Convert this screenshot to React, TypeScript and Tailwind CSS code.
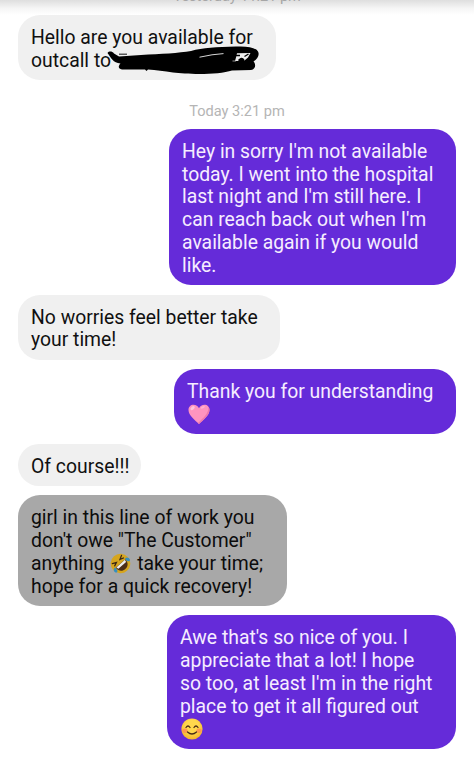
import type { ReactNode } from 'react';

type Message = {
  id: number;
  tone: 'received' | 'sent' | 'muted';
  width: string;
  lines: ReactNode[];
};

const toneClass = {
  received: 'self-start bg-[#f0f0f0] text-[#101010]',
  sent: 'self-end bg-[#652bd9] text-[#f6edff]',
  muted: 'self-start bg-[#a8a8a8] text-[#0c0c0c]',
};

const earlier: Message[] = [
  { id: 1, tone: 'received', width: 'w-[258px]', lines: ['Hello are you available for', <>outcall to<Redaction /></>] },
];

const today: Message[] = [
  {
    id: 2,
    tone: 'sent',
    width: 'w-[287px]',
    lines: [
      "Hey in sorry I'm not available",
      'today. I went into the hospital',
      "last night and I'm still here. I",
      "can reach back out when I'm",
      'available again if you would',
      'like.',
    ],
  },
  { id: 3, tone: 'received', width: 'w-[262px]', lines: ['No worries feel better take', 'your time!'] },
  { id: 4, tone: 'sent', width: 'w-[282px]', lines: ['Thank you for understanding', <Heart />] },
  { id: 5, tone: 'received', width: 'w-[123px]', lines: ['Of course!!!'] },
  {
    id: 6,
    tone: 'muted',
    width: 'w-[269px]',
    lines: [
      'girl in this line of work you',
      'don\'t owe "The Customer"',
      <>anything <Rofl /> take your time;</>,
      'hope for a quick recovery!',
    ],
  },
  {
    id: 7,
    tone: 'sent',
    width: 'w-[289px]',
    lines: [
      "Awe that's so nice of you. I",
      'appreciate that a lot! I hope',
      "so too, at least I'm in the right",
      'place to get it all figured out',
      <Smile />,
    ],
  },
];

export default function App() {
  return (
    <div className="h-[757px] w-[474px] overflow-hidden bg-white font-['Roboto',sans-serif]">
      <div className="flex h-[15px] items-start justify-center overflow-hidden bg-linear-to-b from-[#dedede] via-[#f5f5f5] via-55% to-white">
        <div className="-mt-[12px] text-[14.5px] leading-[18px] text-[#a6a6a6]">Yesterday 11:21 pm</div>
      </div>
      <div className="flex flex-col pr-[18px] pl-[18px]">
        {earlier.map((m) => <Bubble key={m.id} message={m} />)}
      </div>
      <div className="flex h-[49px] items-center justify-center pt-[14px] text-[14.6px] text-[#b5b5b5]">Today 3:21 pm</div>
      <div className="flex flex-col gap-[9.5px] pr-[18px] pl-[18px]">
        {today.map((m) => <Bubble key={m.id} message={m} />)}
      </div>
    </div>
  );
}

function Bubble({ message }: { message: Message }) {
  return (
    <div className={`rounded-[22px] px-[13px] pt-[11.9px] pb-[7.5px] text-[19.35px] leading-[22.8px] whitespace-pre ${message.width} ${toneClass[message.tone]}`}>
      {message.lines.map((line, i) => <div key={i} className="h-[22.8px]">{line}</div>)}
    </div>
  );
}

// Marker scribble over the end of the line
function Redaction() {
  return (
    <span className="relative inline-block">
      <svg className="absolute -top-[23px] -left-[6px]" width="156" height="32" viewBox="104 43 156 32" fill="none">
        <path d="M106.5 52 C108 50 111 50 113 52.5 L118 55.5 L140 54 C160 53 178 52 190 50 C202 46.5 215 46 235 45.5 C246 45 254 46 257 50.5 C259 54 256 58 252.5 60.5 C255 63 255 68 250 69 L231 69.5 C218 74 187 73.5 172 71.5 C163 70 155 69 147 68.5 L145.5 70 L144 68.5 L121 68.5 C117 68 117 65 119.5 62.5 C112 62 110 56.5 106.5 52 Z" fill="#000" />
        <path d="M118 53.2 H126" stroke="#333" strokeWidth="1.2" />
        <path d="M198.5 56.2 L211 53.8 L222.5 52.6" stroke="#eee" strokeWidth="0.9" />
        <path d="M236 52.3 L249.5 52 L247 56.5 L243.5 59.5 Q240 55 237.5 60 L234 60 L235 56.5 Z" fill="#eee" />
        <path d="M234 54.5 H239 M237.5 59.5 Q240.5 55.5 243 59 M243.5 55.5 L247.5 53" stroke="#000" strokeWidth="1.3" />
        <path d="M231.5 60 H235" stroke="#ccc" strokeWidth="0.7" />
      </svg>
    </span>
  );
}

function Heart() {
  return (
    <svg className="ml-[1px]" width="22" height="21" viewBox="0 0 22 21">
      <path d="M11 20 C7 16 .5 11.5 .5 6 C.5 2.8 2.7 .8 5.5 .8 C8 .8 10 2.2 11 4.2 C12 2.2 14 .8 16.5 .8 C19.3 .8 21.5 2.8 21.5 6 C21.5 11.5 15 16 11 20Z" fill="#ff94bf" />
      <path d="M20.3 2.8 C21.2 9 15 14.5 10 18.9 L11 20 C15 16 21.5 11.5 21.5 6 C21.5 4.7 21 3.6 20.3 2.8Z" fill="#ef78ad" />
      <ellipse cx="4.6" cy="4.2" rx="2.5" ry="1.5" transform="rotate(-40 4.6 4.2)" fill="#ffc5dd" />
      <ellipse cx="14.8" cy="3.3" rx="2.2" ry="1" transform="rotate(-25 14.8 3.3)" fill="#ffb3d2" />
    </svg>
  );
}

function Rofl() {
  return (
    <svg className="mx-px inline-block align-[-4px]" width="21" height="21" viewBox="0 0 22 22">
      <g transform="rotate(-42 11 11)">
        <circle cx="11" cy="11" r="10.3" fill="#d6a51e" />
        <path d="M4.2 11 H17.8 C17.8 16 15 18.6 11 18.6 C7 18.6 4.2 16 4.2 11Z" fill="#4d2d17" />
        <path d="M5 11.2 H17 L16.4 13.7 H5.6Z" fill="#eee" />
        <path d="M4.5 5.4 L8.5 7.4 L4.8 8.8 M17.5 5.4 L13.5 7.4 L17.2 8.8" fill="none" stroke="#372515" strokeWidth="1.3" strokeLinecap="round" />
        <path d="M4 10.2 C1.4 10 .2 12.4 .8 14.4 C2 16.6 4.8 15 4 10.2Z M18 10.2 C20.6 10 21.8 12.4 21.2 14.4 C20 16.6 17.2 15 18 10.2Z" fill="#358fc0" />
      </g>
    </svg>
  );
}

function Smile() {
  return (
    <svg className="ml-[1px]" width="22" height="22" viewBox="0 0 22 22">
      <defs>
        <radialGradient id="face" cx="50%" cy="38%" r="60%">
          <stop offset="0.5" stopColor="#ffd84d" />
          <stop offset="1" stopColor="#f5b62c" />
        </radialGradient>
      </defs>
      <circle cx="11" cy="11" r="10.6" fill="url(#face)" />
      <ellipse cx="4" cy="12.8" rx="2.7" ry="2.2" fill="#ff8b52" opacity="0.75" />
      <ellipse cx="18" cy="12.8" rx="2.7" ry="2.2" fill="#ff8b52" opacity="0.75" />
      <path d="M5 9.5 Q7 6.5 9 9.5 M13 9.5 Q15 6.5 17 9.5 M6.5 14 Q11 18 15.5 14" fill="none" stroke="#4a2c16" strokeWidth="1.3" strokeLinecap="round" />
    </svg>
  );
}
